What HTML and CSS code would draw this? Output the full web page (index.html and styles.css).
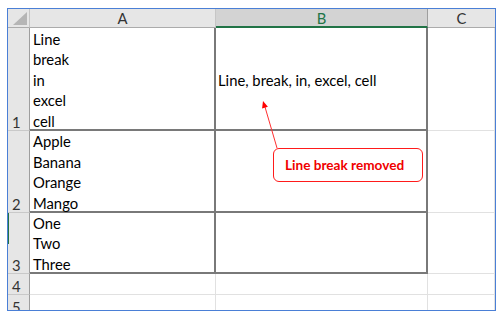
FILE: index.html
```html
<!DOCTYPE html>
<html>
<head>
<meta charset="utf-8">
<link rel="stylesheet" href="styles.css">
</head>
<body>
<div class="sheet">
  <div class="grid">
    <div class="corner"><span class="tri"></span></div>
    <div class="colhead">A</div>
    <div class="colhead sel">B</div>
    <div class="colhead last">C</div>

    <div class="rowhead"><span class="txt">1</span></div>
    <div class="cell thick-r thick-b"><span class="txt">Line<br>break<br>in<br>excel<br>cell</span></div>
    <div class="cell thick-r thick-b mid"><span>Line, break, in, excel, cell</span></div>
    <div class="cell plain"></div>

    <div class="rowhead"><span class="txt">2</span></div>
    <div class="cell thick-r thick-b"><span class="txt">Apple<br>Banana<br>Orange<br>Mango</span></div>
    <div class="cell thick-r thick-b"></div>
    <div class="cell plain"></div>

    <div class="rowhead mark"><span class="txt">3</span></div>
    <div class="cell thick-r thick-b"><span class="txt">One<br>Two<br>Three</span></div>
    <div class="cell thick-r thick-b"></div>
    <div class="cell plain"></div>

    <div class="rowhead"><span class="txt">4</span></div>
    <div class="cell plain"></div>
    <div class="cell plain"></div>
    <div class="cell plain"></div>

    <div class="rowhead"><span class="txt">5</span></div>
    <div class="cell plain"></div>
    <div class="cell plain"></div>
    <div class="cell plain"></div>
  </div>

  <svg class="arrow" width="487" height="301" viewBox="0 0 487 301">
    <line x1="269" y1="139" x2="257" y2="98" stroke="#ff3030" stroke-width="1"/>
    <polygon points="255,92 259.9,97.8 254.1,99.6" fill="#ff0000"/>
  </svg>
  <div class="callout">Line break removed</div>
</div>
</body>
</html>
```

FILE: styles.css
```css
html, body {
  margin: 0;
  padding: 0;
  background: #ffffff;
}

.sheet {
  position: relative;
  margin: 8px 0 0 7px;
  width: 487px;
  height: 301px;
  border: 1px solid #4a7fd6;
  overflow: hidden;
  background: #ffffff;
}

.grid {
  display: grid;
  grid-template-columns: 22px 186px 212px 67px;
  grid-template-rows: 19px 103px 82px 61px 21px 21px;
  font-family: "Lato", "Open Sans", sans-serif;
  font-size: 14.8px;
  line-height: 20.4px;
  color: #000;
}

.grid > div {
  box-sizing: border-box;
}

.txt {
  margin-bottom: -2px;
}

.corner {
  background: #e6e6e6;
  border-right: 1px solid #c6c6c6;
  border-bottom: 1px solid #ababab;
  position: relative;
}

.tri {
  position: absolute;
  right: 2px;
  bottom: 2px;
  width: 14px;
  height: 13px;
  background: #b5b5b5;
  clip-path: polygon(100% 0, 100% 100%, 0 100%);
}

.colhead {
  background: #e6e6e6;
  border-right: 1px solid #c6c6c6;
  border-bottom: 1px solid #ababab;
  text-align: center;
  color: #333;
  font-size: 14.8px;
  line-height: 19px;
}

.colhead.sel {
  background: #d3d3d3;
  color: #217346;
  border-bottom: 2px solid #217346;
  border-right-color: #9e9e9e;
}

.colhead.last {
  border-right: none;
}

.rowhead {
  background: #e6e6e6;
  border-right: 1px solid #9e9e9e;
  border-bottom: 1px solid #c9c9c9;
  display: flex;
  align-items: flex-end;
  padding: 0 0 0 4px;
  color: #333;
}

.rowhead.mark {
  background: linear-gradient(#217346, #217346) no-repeat 0 0 / 1px 31px, #e6e6e6;
}

.cell {
  display: flex;
  align-items: flex-end;
  padding-left: 3px;
  border-right: 1px solid #e1e1e1;
  border-bottom: 1px solid #e1e1e1;
}

.cell.mid {
  align-items: center;
  padding-left: 2px;
  padding-top: 4px;
}

.cell.thick-r {
  border-right: 2px solid #797979;
}

.cell.thick-b {
  border-bottom: 2px solid #797979;
}

.arrow {
  position: absolute;
  left: 0;
  top: 0;
}

.callout {
  position: absolute;
  left: 265px;
  top: 139px;
  width: 150px;
  height: 34px;
  box-sizing: border-box;
  border: 1.5px solid #ff1a1a;
  border-radius: 6px;
  background: #ffffff;
  color: #f00000;
  font-family: "Lato", "Open Sans", sans-serif;
  font-weight: bold;
  font-size: 13.6px;
  display: flex;
  align-items: center;
  padding-left: 11px;
  padding-bottom: 1px;
}
```
